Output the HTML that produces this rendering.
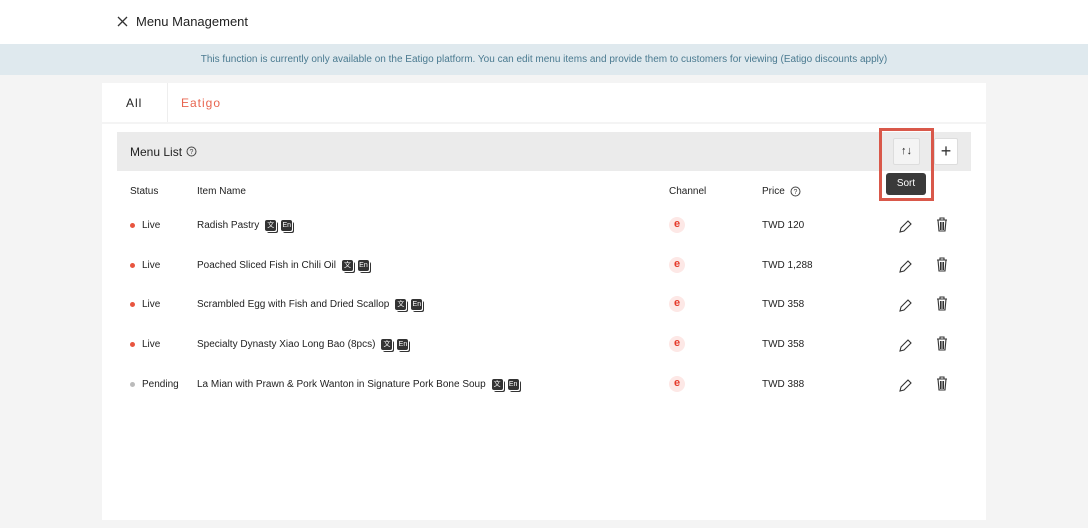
<!DOCTYPE html>
<html><head><style>
*{margin:0;padding:0;box-sizing:border-box}
body{width:1088px;height:528px;background:#f4f4f4;font-family:"Liberation Sans",Arial,sans-serif;position:relative;overflow:hidden;color:#222}
.abs{position:absolute}
.hdr{left:0;top:0;width:1088px;height:44px;background:#fff}
.ban{left:0;top:44px;width:1088px;height:31px;background:#dfe9ee;color:#4a7a90;font-size:10px;text-align:center;line-height:31px}
.card{left:102px;top:83px;width:884px;height:437px;background:#fff}
.t{font-size:10px;white-space:nowrap}
.dot{width:5px;height:5px;border-radius:50%;background:#e8553f}
.ic{display:inline-block;width:11px;height:11px;background:#333;border-radius:2px;vertical-align:1px;margin-left:3px;color:#fff;font-size:7px;line-height:11px;text-align:center;box-shadow:1px 1px 0 #fff,2px 2px 0 #333}
.ch{width:16px;height:16px;border-radius:50%;background:#fde8e6;color:#e53a2a;font-weight:bold;font-size:11px;text-align:center;line-height:15px}
</style></head><body>
<div class="abs hdr"></div>
<svg class="abs" style="left:117px;top:16px" width="11" height="11"><path d="M1 1L10 10M10 1L1 10" stroke="#333" stroke-width="1.3"/></svg>
<div class="abs" style="left:136px;top:14px;font-size:13px;color:#222">Menu Management</div>
<div class="abs ban">This function is currently only available on the Eatigo platform. You can edit menu items and provide them to customers for viewing (Eatigo discounts apply)</div>
<div class="abs card"></div>
<div class="abs" style="left:167px;top:83px;width:1px;height:40px;background:#eee"></div>
<div class="abs" style="left:102px;top:122px;width:884px;height:2px;background:#f4f4f4"></div>
<div class="abs" style="left:126px;top:96px;font-size:12px;letter-spacing:1px">All</div>
<div class="abs" style="left:181px;top:96px;font-size:12px;color:#e8654f;letter-spacing:1px">Eatigo</div>
<div class="abs" style="left:117px;top:132px;width:854px;height:39px;background:#ebebeb"></div>
<div class="abs" style="left:130px;top:145px;font-size:12px">Menu List</div>
<svg class="abs" style="left:186px;top:146px" width="11" height="11"><circle cx="5.5" cy="5.5" r="4.5" fill="none" stroke="#444"/><text x="5.5" y="8" font-size="7" text-anchor="middle" fill="#444" font-family="Liberation Sans">?</text></svg>
<div class="abs" style="left:893px;top:138px;width:27px;height:27px;background:#f4f4f4;border:1px solid #ddd;border-radius:2px;font-size:11px;text-align:center;line-height:25px">↑↓</div>
<div class="abs" style="left:934px;top:138px;width:24px;height:27px;background:#fff;border:1px solid #ddd;border-radius:2px;font-size:18px;text-align:center;line-height:24px;color:#333">+</div>
<div class="abs" style="left:886px;top:173px;width:40px;height:22px;background:#3a3a3a;border-radius:3px;color:#fff;font-size:10px;text-align:center;line-height:22px">Sort</div>
<div class="abs" style="left:879px;top:128px;width:55px;height:73px;border:3px solid #d9584a"></div>
<div class="abs t" style="left:130px;top:186px">Status</div>
<div class="abs t" style="left:197px;top:186px">Item Name</div>
<div class="abs t" style="left:669px;top:186px">Channel</div>
<div class="abs t" style="left:762px;top:186px">Price</div>
<svg class="abs" style="left:790px;top:186px" width="11" height="11"><circle cx="5.5" cy="5.5" r="4.5" fill="none" stroke="#444"/><text x="5.5" y="8" font-size="7" text-anchor="middle" fill="#444" font-family="Liberation Sans">?</text></svg>

<div class="abs dot" style="left:130px;top:223px"></div><div class="abs t" style="left:142px;top:220px">Live</div><div class="abs t" style="left:197px;top:220px">Radish Pastry<span class="ic" style="margin-left:6px">文</span><span class="ic" style="margin-left:5px">En</span></div><div class="abs ch" style="left:669px;top:217px">e</div><div class="abs t" style="left:762px;top:220px">TWD 120</div>
<div class="abs dot" style="left:130px;top:263px"></div><div class="abs t" style="left:142px;top:260px">Live</div><div class="abs t" style="left:197px;top:260px">Poached Sliced Fish in Chili Oil<span class="ic" style="margin-left:6px">文</span><span class="ic" style="margin-left:5px">En</span></div><div class="abs ch" style="left:669px;top:257px">e</div><div class="abs t" style="left:762px;top:260px">TWD 1,288</div>
<div class="abs dot" style="left:130px;top:302px"></div><div class="abs t" style="left:142px;top:299px">Live</div><div class="abs t" style="left:197px;top:299px">Scrambled Egg with Fish and Dried Scallop<span class="ic" style="margin-left:6px">文</span><span class="ic" style="margin-left:5px">En</span></div><div class="abs ch" style="left:669px;top:296px">e</div><div class="abs t" style="left:762px;top:299px">TWD 358</div>
<div class="abs dot" style="left:130px;top:342px"></div><div class="abs t" style="left:142px;top:339px">Live</div><div class="abs t" style="left:197px;top:339px">Specialty Dynasty Xiao Long Bao (8pcs)<span class="ic" style="margin-left:6px">文</span><span class="ic" style="margin-left:5px">En</span></div><div class="abs ch" style="left:669px;top:336px">e</div><div class="abs t" style="left:762px;top:339px">TWD 358</div>
<div class="abs dot" style="left:130px;top:382px;background:#bbb"></div><div class="abs t" style="left:142px;top:379px">Pending</div><div class="abs t" style="left:197px;top:379px">La Mian with Prawn &amp; Pork Wanton in Signature Pork Bone Soup<span class="ic" style="margin-left:6px">文</span><span class="ic" style="margin-left:5px">En</span></div><div class="abs ch" style="left:669px;top:376px">e</div><div class="abs t" style="left:762px;top:379px">TWD 388</div>

<svg class="abs" style="left:0;top:0" width="1088" height="528">
<g fill="none" stroke="#333" stroke-width="1.1">
<g id="a" transform="translate(0,223)"><path d="M901 5L908 -2L911 1L904 8L900 9Z"/><path d="M937 -3h10M940 -3v-2h4v2M938 -3l1 11h6l1-11M940.5 -1v8M942 -1v8M943.5 -1v8"/></g>
<use href="#a" y="40"/><use href="#a" y="79"/><use href="#a" y="119"/><use href="#a" y="159"/>
</g></svg>
</body></html>
